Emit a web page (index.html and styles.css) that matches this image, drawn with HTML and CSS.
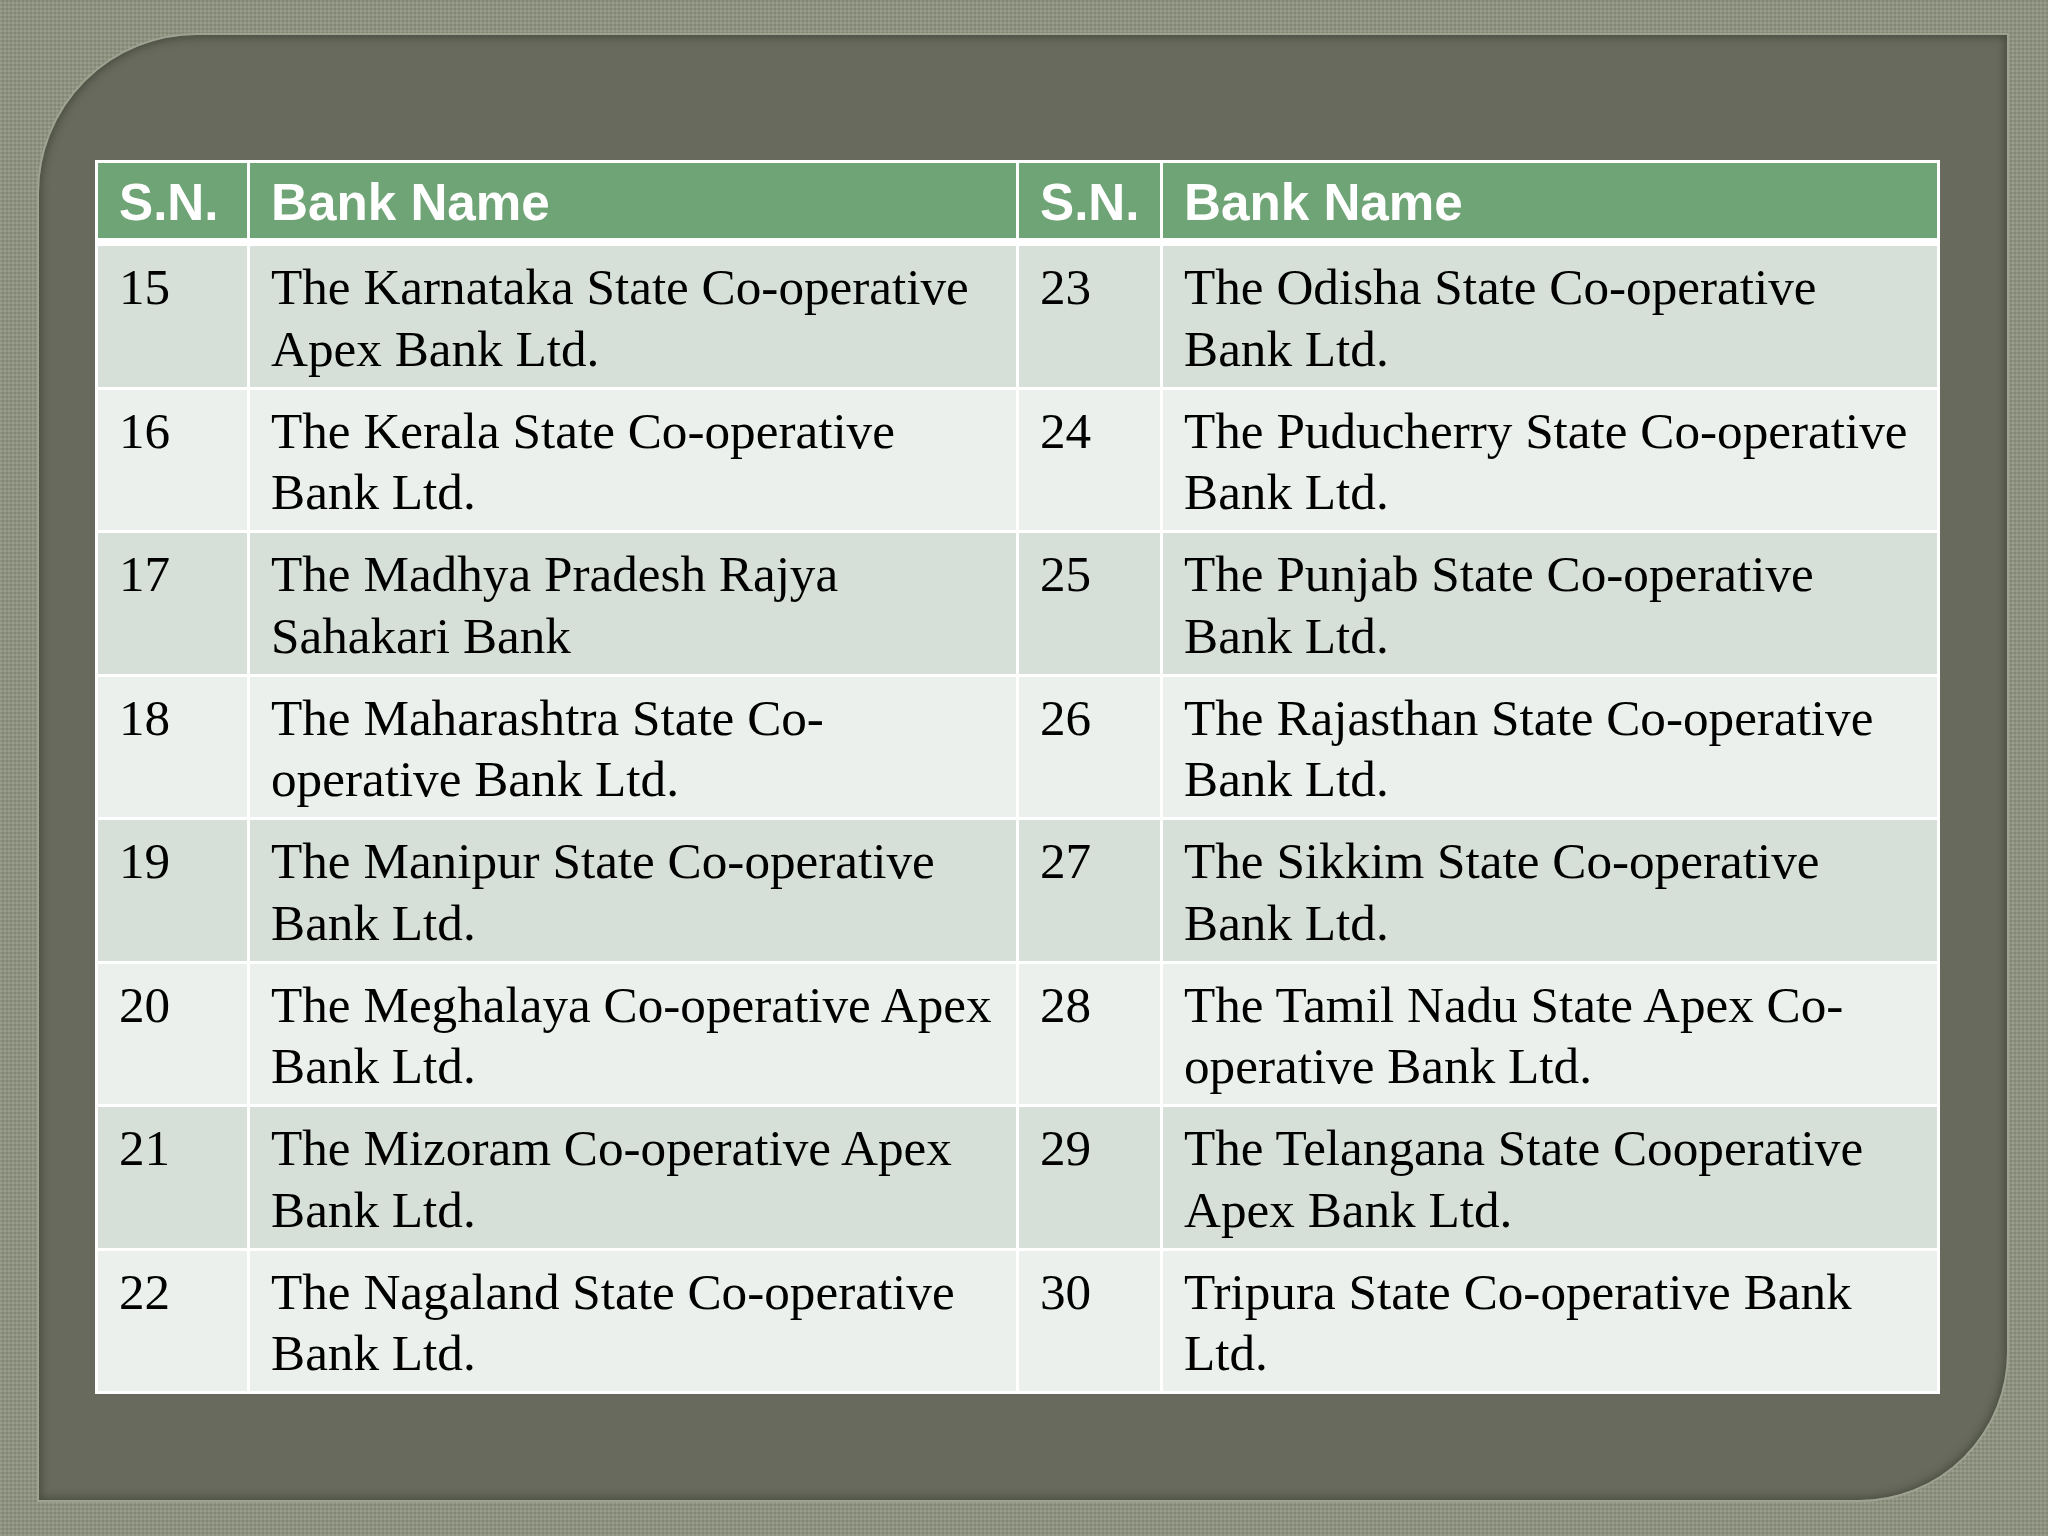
FILE: index.html
```html
<!DOCTYPE html>
<html lang="en">
<head>
<meta charset="utf-8">
<title>State Co-operative Banks</title>
<link rel="stylesheet" href="styles.css">
</head>
<body>
<div class="panel">
  <table class="banks">
    <colgroup>
      <col class="c-sn1"><col class="c-name1"><col class="c-sn2"><col class="c-name2">
    </colgroup>
    <thead>
      <tr><th>S.N.</th><th>Bank Name</th><th>S.N.</th><th>Bank Name</th></tr>
    </thead>
    <tbody>
      <tr class="odd"><td>15</td><td>The Karnataka State Co-operative<br>Apex Bank Ltd.</td><td>23</td><td>The Odisha State Co-operative<br>Bank Ltd.</td></tr>
      <tr class="even"><td>16</td><td>The Kerala State Co-operative<br>Bank Ltd.</td><td>24</td><td>The Puducherry State Co-operative<br>Bank Ltd.</td></tr>
      <tr class="odd"><td>17</td><td>The Madhya Pradesh Rajya<br>Sahakari Bank</td><td>25</td><td>The Punjab State Co-operative<br>Bank Ltd.</td></tr>
      <tr class="even"><td>18</td><td>The Maharashtra State Co-<br>operative Bank Ltd.</td><td>26</td><td>The Rajasthan State Co-operative<br>Bank Ltd.</td></tr>
      <tr class="odd"><td>19</td><td>The Manipur State Co-operative<br>Bank Ltd.</td><td>27</td><td>The Sikkim State Co-operative<br>Bank Ltd.</td></tr>
      <tr class="even"><td>20</td><td>The Meghalaya Co-operative Apex<br>Bank Ltd.</td><td>28</td><td>The Tamil Nadu State Apex Co-<br>operative Bank Ltd.</td></tr>
      <tr class="odd"><td>21</td><td>The Mizoram Co-operative Apex<br>Bank Ltd.</td><td>29</td><td>The Telangana State Cooperative<br>Apex Bank Ltd.</td></tr>
      <tr class="even"><td>22</td><td>The Nagaland State Co-operative<br>Bank Ltd.</td><td>30</td><td>Tripura State Co-operative Bank<br>Ltd.</td></tr>
    </tbody>
  </table>
</div>
</body>
</html>
```
FILE: styles.css
```css
html, body {
  margin: 0;
  padding: 0;
}
body {
  width: 2048px;
  height: 1536px;
  box-sizing: border-box;
  padding: 33px 39px 34px 37px;
  background-color: #8a8f7c;
  background-image:
    repeating-linear-gradient(0deg, rgba(255,255,255,0.07) 0 2px, rgba(0,0,0,0.03) 2px 4px),
    repeating-linear-gradient(90deg, rgba(255,255,255,0.07) 0 2px, rgba(0,0,0,0.03) 2px 4px);
  overflow: hidden;
}
.panel {
  box-sizing: border-box;
  width: 1972px;
  height: 1469px;
  background: #676a5c;
  border: 2px solid #9ea391;
  border-radius: 160px 0 150px 0;
  box-shadow: inset 0 0 8px 2px rgba(45,47,38,0.55);
  padding: 125px 0 0 56px;
  display: flex;
  align-items: flex-start;
}
.banks {
  table-layout: fixed;
  width: 1845px;
  border-collapse: separate;
  border-spacing: 3px;
  background: #ffffff;
}
.c-sn1 { width: 149px; }
.c-name1 { width: 766px; }
.c-sn2 { width: 141px; }
.c-name2 { width: 774px; }
.banks th {
  background: #6fa476;
  color: #ffffff;
  font-family: "Liberation Sans", Arial, sans-serif;
  font-weight: bold;
  font-size: 51.2px;
  line-height: 61.44px;
  text-align: left;
  padding: 9px 10px 5px 21px;
  border-bottom: 5px solid #ffffff;
  white-space: nowrap;
}
.banks td {
  font-family: "Liberation Serif", "Times New Roman", serif;
  font-size: 51.2px;
  line-height: 61.44px;
  color: #000000;
  vertical-align: top;
  text-align: left;
  padding: 10px 10px 7.6px 21px;
  white-space: nowrap;
}
.banks tr.odd td { background: #d6e0d8; }
.banks tr.even td { background: #ebf0ec; }
```
